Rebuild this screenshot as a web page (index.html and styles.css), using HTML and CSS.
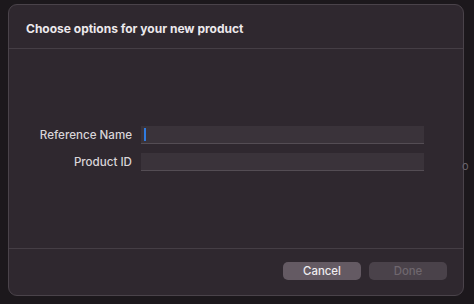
FILE: index.html
```html
<!DOCTYPE html>
<html lang="en">
<head>
  <meta charset="UTF-8">
  <title>Choose options for your new product</title>
  <link rel="stylesheet" href="styles.css">
</head>
<body>
  <div class="sheet">
    <div class="sheet-header">Choose options for your new product</div>
    <div class="sheet-body">
      <form class="options-form">
        <label for="ref-name">Reference Name</label>
        <div class="field focused"><input type="text" id="ref-name"><span class="caret"></span></div>
        <label for="product-id">Product ID</label>
        <div class="field"><input type="text" id="product-id"></div>
      </form>
    </div>
    <div class="sheet-footer">
      <button class="btn">Cancel</button>
      <button class="btn" disabled>Done</button>
    </div>
  </div>
  <div class="behind"><span>o</span></div>
</body>
</html>
```

FILE: styles.css
```css
/* Global */
body {
  margin: 0;
  width: 474px;
  height: 304px;
  box-sizing: border-box;
  padding: 4px 0 8px 8px;
  background-color: #1c181c;
  font-family: 'Inter', 'Liberation Sans', sans-serif;
  color: #e6e3e6;
  display: flex;
  overflow: hidden;
}

/* Sheet */
.sheet {
  width: 456px;
  height: 292px;
  box-sizing: border-box;
  background-color: #2f282f;
  border: 1px solid #4a434a;
  border-radius: 9px;
  display: flex;
  flex-direction: column;
}

.sheet-header {
  height: 44px;
  padding: 3px 0 0 17px;
  display: flex;
  align-items: center;
  box-sizing: border-box;
  font-size: 12px;
  font-weight: 700;
  color: #ece9ec;
  border-bottom: 1px solid #453e45;
}

.sheet-body {
  flex: 1;
  display: flex;
  align-items: center;
  border-bottom: 1px solid #453e45;
}

.options-form {
  display: grid;
  grid-template-columns: 123px 283px;
  column-gap: 9px;
  row-gap: 9px;
  align-items: center;
}

.options-form label {
  text-align: right;
  font-size: 11.6px;
  font-weight: 500;
  color: #d9d5d9;
}

.field {
  position: relative;
  height: 17px;
  background-color: #3a333a;
  border-bottom: 1px solid #544d54;
}

.field input {
  width: 100%;
  height: 100%;
  box-sizing: border-box;
  border: none;
  background: transparent;
  outline: none;
  padding: 0;
}

.caret {
  position: absolute;
  left: 3px;
  top: 2px;
  width: 2px;
  height: 13px;
  background-color: #2f7be0;
}

.sheet-footer {
  height: 46px;
  display: flex;
  justify-content: flex-end;
  align-items: center;
  gap: 8px;
  padding: 0 16px 2px 0;
  box-sizing: border-box;
}

.btn {
  width: 78px;
  height: 18px;
  border: none;
  border-radius: 5px;
  background-color: #645a63;
  color: #efecef;
  font-family: inherit;
  font-size: 11.4px;
  font-weight: 500;
  padding: 0;
}

.btn:disabled {
  background-color: #4a424a;
  color: #6f676e;
}

.behind {
  flex: 1;
  display: flex;
  align-items: center;
  color: #6a646a;
  font-size: 11px;
  padding-top: 32px;
}

.behind span {
  margin-left: -2px;
}
```
